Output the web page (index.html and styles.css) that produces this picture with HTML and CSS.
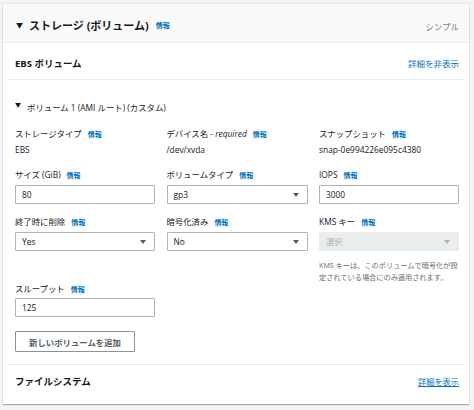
FILE: index.html
```html
<!DOCTYPE html>
<html lang="ja">
<head>
<meta charset="utf-8">
<link rel="stylesheet" href="styles.css">
</head>
<body>
<div class="card">
  <div class="card-header">
    <div class="title"><span class="caret">▼</span>ストレージ (ボリューム)<span class="info">情報</span></div>
    <span class="mode">シンプル</span>
  </div>
  <div class="card-body">
    <div class="sub-header">
      <span class="sub-title">EBS ボリューム</span>
      <span class="link">詳細を非表示</span>
    </div>
    <div class="volume">
      <div class="vol-title"><span class="vol-caret">▼</span>ボリューム 1 (AMI ルート) (カスタム)</div>
      <div class="grid">
        <div class="field">
          <div class="label">ストレージタイプ<span class="info">情報</span></div>
          <div class="value">EBS</div>
        </div>
        <div class="field">
          <div class="label">デバイス名 - <i>required</i><span class="info">情報</span></div>
          <div class="value">/dev/xvda</div>
        </div>
        <div class="field">
          <div class="label">スナップショット<span class="info">情報</span></div>
          <div class="value">snap-0e994226e095c4380</div>
        </div>

        <div class="field">
          <div class="label">サイズ (GiB)<span class="info">情報</span></div>
          <div class="input">80</div>
        </div>
        <div class="field">
          <div class="label">ボリュームタイプ<span class="info">情報</span></div>
          <div class="input select">gp3<span class="arrow"></span></div>
        </div>
        <div class="field">
          <div class="label">IOPS<span class="info">情報</span></div>
          <div class="input">3000</div>
        </div>

        <div class="field">
          <div class="label">終了時に削除<span class="info">情報</span></div>
          <div class="input select">Yes<span class="arrow"></span></div>
        </div>
        <div class="field">
          <div class="label">暗号化済み<span class="info">情報</span></div>
          <div class="input select">No<span class="arrow"></span></div>
        </div>
        <div class="field">
          <div class="label">KMS キー<span class="info">情報</span></div>
          <div class="input select disabled">選択<span class="arrow"></span></div>
          <div class="help">KMS キーは、このボリュームで暗号化が設<br>定されている場合にのみ適用されます。</div>
        </div>
      </div>
      <div class="field throughput">
        <div class="label">スループット<span class="info">情報</span></div>
        <div class="input">125</div>
      </div>
      <div class="button">新しいボリュームを追加</div>
    </div>
    <div class="footer-row">
      <span class="sub-title">ファイルシステム</span>
      <span class="link underline">詳細を表示</span>
    </div>
  </div>
</div>
</body>
</html>
```

FILE: styles.css
```css
* { box-sizing: border-box; }
html, body { margin: 0; }
body {
  background: #f2f3f3;
  padding: 4px 5px 0 3px;
  font-family: "Open Sans", "Noto Sans CJK JP", sans-serif;
  color: #16191f;
  width: 474px;
  height: 410px;
  overflow: hidden;
}
.card {
  background: #fff;
  width: 466px;
  height: 400px;
  box-shadow: 0 1px 1px rgba(0,28,36,0.3), 0 0 0 1px #e8eaea;
  display: flex;
  flex-direction: column;
}
.card-header {
  height: 39px;
  background: #fafafa;
  border-bottom: 1px solid #eaeded;
  display: flex;
  align-items: center;
  justify-content: space-between;
  padding: 5px 10px 0 13px;
}
.title {
  font-size: 11px;
  font-weight: 700;
  display: flex;
  align-items: center;
  line-height: 14px;
}
.caret {
  font-size: 7px;
  margin-right: 6px;
  color: #16191f;
}
.info {
  font-size: 7px;
  font-weight: 700;
  color: #0073bb;
  margin-left: 6px;
}
.title .info { margin-left: 7px; }
.mode {
  font-size: 8.5px;
  color: #5f7a8e;
}
.card-body {
  padding: 0 5px;
  flex: 1;
  display: flex;
  flex-direction: column;
}
.sub-header, .footer-row {
  height: 37px;
  border-bottom: 1px solid #eaeded;
  display: flex;
  align-items: center;
  justify-content: space-between;
  padding: 4px 5px 0 7px;
}
.footer-row {
  border-bottom: none;
  border-top: 1px solid #eaeded;
  height: 33px;
  margin-top: 12px;
  padding-top: 0;
}
.sub-title {
  font-size: 9.5px;
  font-weight: 700;
}
.link {
  font-size: 8.5px;
  color: #0073bb;
}
.underline { text-decoration: underline; font-size: 8.2px; }
.volume {
  padding-left: 7px;
}
.vol-title {
  margin-top: 22px;
  font-size: 8.4px;
  line-height: 12px;
  display: flex;
  align-items: center;
  color: #16191f;
}
.vol-caret {
  font-size: 6px;
  margin-right: 6px;
  position: relative;
  top: -3px;
}
.grid {
  margin-top: 14px;
  display: grid;
  grid-template-columns: 140px 141px 140px;
  column-gap: 11.5px;
  row-gap: 12.5px;
}
.label {
  font-size: 8.4px;
  line-height: 12px;
  height: 12px;
  color: #16191f;
  white-space: nowrap;
}
.label i { font-style: italic; }
.value {
  margin-top: 4px;
  font-size: 8.4px;
  line-height: 12px;
}
.input {
  margin-top: 4px;
  height: 19px;
  border: 1px solid #aab7b8;
  border-radius: 1px;
  font-size: 8.4px;
  line-height: 17px;
  padding: 0 6px;
  position: relative;
  background: #fff;
}
.select .arrow {
  position: absolute;
  right: 8px;
  top: 7px;
  width: 0;
  height: 0;
  border-left: 3px solid transparent;
  border-right: 3px solid transparent;
  border-top: 4px solid #545b64;
}
.disabled {
  background: #eaeded;
  border-color: #eaeded;
  color: #aab7b8;
}
.disabled .arrow { border-top-color: #aab7b8; }
.help {
  margin-top: 8px;
  font-size: 7.2px;
  line-height: 12px;
  color: #687078;
  white-space: nowrap;
}
.throughput {
  margin-top: 0;
  width: 140px;
}
.throughput .input { margin-top: 3px; }
.button {
  margin-top: 14px;
  width: 120px;
  height: 21px;
  border: 1px solid #879596;
  border-radius: 1px;
  font-size: 8.4px;
  font-weight: 700;
  color: #545b64;
  display: flex;
  align-items: center;
  justify-content: center;
}
```
